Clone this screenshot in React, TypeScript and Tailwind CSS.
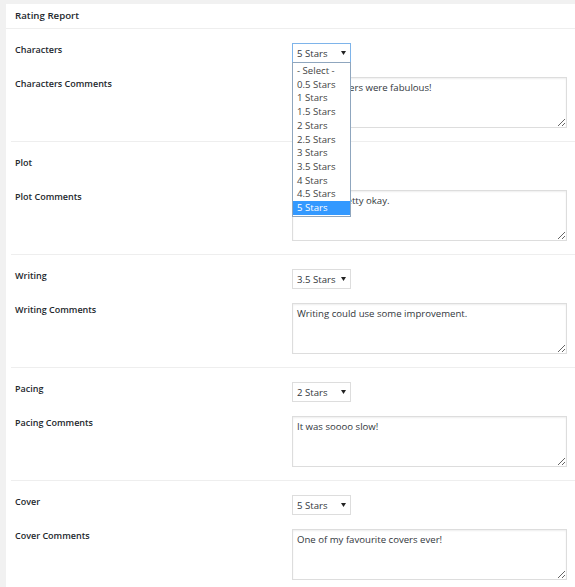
import { useState } from "react";

const OPTIONS = [
  "- Select -",
  "0.5 Stars",
  "1 Stars",
  "1.5 Stars",
  "2 Stars",
  "2.5 Stars",
  "3 Stars",
  "3.5 Stars",
  "4 Stars",
  "4.5 Stars",
  "5 Stars",
];

const SECTIONS = [
  { name: "Characters", rating: "5 Stars", comment: "The characters were fabulous!", open: true },
  { name: "Plot", rating: "3 Stars", comment: "Plot was pretty okay." },
  { name: "Writing", rating: "3.5 Stars", comment: "Writing could use some improvement." },
  { name: "Pacing", rating: "2 Stars", comment: "It was soooo slow!" },
  { name: "Cover", rating: "5 Stars", comment: "One of my favourite covers ever!" },
];

export default function App() {
  return (
    <div className="min-h-screen bg-[#f1f1f1] pl-[6px] pt-[4px] font-['Open_Sans',sans-serif] text-[#32373c]">
      <div className="bg-white">
        <div className="flex h-[25px] items-center border-b border-[#eeeeee] pl-[9px] text-[9.7px] font-semibold text-[#23282d]">
          Rating Report
        </div>
        <div className="pl-[5px]">
          {SECTIONS.map((s, i) => (
            <Section key={s.name} {...s} first={i === 0} />
          ))}
        </div>
      </div>
    </div>
  );
}

function Section({
  name,
  rating,
  comment,
  open,
  first,
}: {
  name: string;
  rating: string;
  comment: string;
  open?: boolean;
  first: boolean;
}) {
  return (
    <div className={`grid grid-cols-[281px_275px] content-start gap-y-[14px] ${first ? "h-[112px] pt-[14px]" : "h-[113px] border-t border-[#eeeeee] pt-[14px]"}`}>
      <div className="pl-[4px] text-[9px] leading-[13px] font-semibold text-[#23282d]">{name}</div>
      <RatingSelect value={rating} open={open} />
      <div className="pl-[4px] text-[9px] leading-[13px] font-semibold text-[#23282d]">{name} Comments</div>
      <textarea
        defaultValue={comment}
        className="block h-[51px] w-[275px] border border-[#dddddd] bg-white px-[4px] pt-[3px] text-[9.6px] leading-[13px] text-[#32373c] shadow-[inset_0_1px_2px_rgba(0,0,0,0.07)] outline-none"
      />
    </div>
  );
}

function RatingSelect({ value, open }: { value: string; open?: boolean }) {
  const [v, setV] = useState(value);
  return (
    <div className="relative h-[20px] w-[59px]">
      <select
        value={v}
        onChange={(e) => setV(e.target.value)}
        className={`block h-[20px] w-[59px] appearance-none border bg-white pl-[4px] text-[9.6px] leading-[13px] text-[#32373c] outline-none ${open ? "border-[#7eb4ea]" : "border-[#dddddd]"}`}
      >
        {OPTIONS.map((o) => (
          <option key={o} value={o}>{o}</option>
        ))}
      </select>
      <svg className="pointer-events-none absolute right-[5px] top-[8px]" width="5" height="4" viewBox="0 0 5 4">
        <path d="M0 0h5L2.5 4z" fill="#222" />
      </svg>
      {open && (
        <ul className="absolute left-0 top-[19px] z-10 w-[59px] border border-[#8fa6be] bg-white py-[1px] text-[9.6px] leading-[13.7px] text-[#444]">
          {OPTIONS.map((o) => (
            <li key={o} className={`pl-[4px] ${o === v ? "bg-[#3399ff] text-white" : ""}`}>
              {o}
            </li>
          ))}
        </ul>
      )}
    </div>
  );
}
